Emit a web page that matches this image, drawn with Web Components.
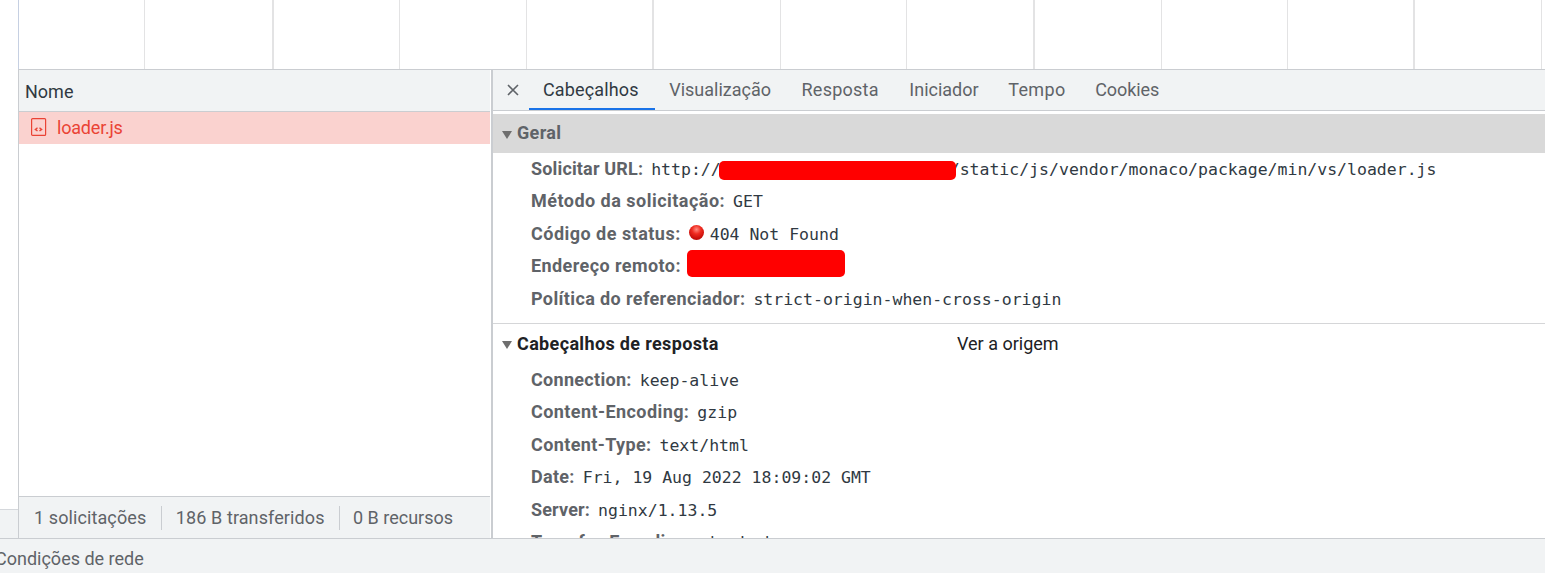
<!DOCTYPE html>
<html lang="pt-BR">
<head>
<meta charset="utf-8">
<title>Rede</title>
<style>
    html, body { margin: 0; height: 573px; overflow: hidden; background: #fff; }
    body { font-family: Roboto, "Liberation Sans", sans-serif; font-size: 18px; }
    network-panel { height: 573px; }
</style>
</head>
<body>
<network-panel>
    <request-list slot="list" name="loader.js">
        <status-item>1 solicitações</status-item>
        <status-item>186 B transferidos</status-item>
        <status-item>0 B recursos</status-item>
    </request-list>
    <request-details slot="details">
        <header-section title="Geral" band>
            <header-row style="--track:.16px" name="Solicitar URL:"><span>http://</span><redacted-box w="237" h="19" before="-2" after="-6" drop="3"></redacted-box><span>/static/js/vendor/monaco/package/min/vs/loader.js</span></header-row>
            <header-row style="--track:.48px" name="Método da solicitação:">GET</header-row>
            <header-row style="--track:.48px" name="Código de status:"><status-dot></status-dot>404 Not Found</header-row>
            <header-row style="--track:.42px" name="Endereço remoto:"><redacted-box w="158" h="27" before="-2" after="0" drop="-6"></redacted-box></header-row>
            <header-row style="--track:.38px" name="Política do referenciador:">strict-origin-when-cross-origin</header-row>
        </header-section>
        <header-section title="Cabeçalhos de resposta" action="Ver a origem">
            <header-row name="Connection:">keep-alive</header-row>
            <header-row style="--track:.42px" name="Content-Encoding:">gzip</header-row>
            <header-row style="--track:.38px" name="Content-Type:">text/html</header-row>
            <header-row name="Date:">Fri, 19 Aug 2022 18:09:02 GMT</header-row>
            <header-row style="--track:.16px" name="Server:">nginx/1.13.5</header-row>
            <header-row name="Transfer-Encoding:">chunked</header-row>
        </header-section>
    </request-details>
</network-panel>

<script>
class NetworkPanel extends HTMLElement {
    constructor() {
        super();
        this.attachShadow({ mode: 'open' });
        // some grid lines of the overview land on two pixels
        const widths = [[126, 1], [129, 2], [126, 1], [127, 1], [127, 2], [127, 1], [126, 1], [128, 2], [127, 1], [126, 1], [127, 2], [127, 1]];
        const cells = widths.map(([w, line]) => `<div class="cell" style="width:${w}px;border-right-width:${line}px"></div>`).join('');
        this.shadowRoot.innerHTML = `
            <style>
                :host { display: grid; grid-template-columns: 18px 1fr; grid-template-rows: 1fr 35px; }
                .rail { display: flex; flex-direction: column; }
                .rail .top { height: 509px; background: #fff; }
                .rail .bottom { flex: 1; background: #f1f3f4; border-top: 1px solid #d5d8dc; }
                .main { display: flex; flex-direction: column; min-width: 0; overflow: hidden; }
                .timeline { display: flex; height: 69px; flex: none; border-left: 1px solid #c6d0e2; background: #fff; }
                .cell { flex: none; box-sizing: border-box; border-right: 1px solid #e3e3e4; }
                .panes { flex: 1; min-height: 0; display: grid; grid-template-columns: 474px 1fr; border-top: 1px solid #cacdd1; border-left: 1px solid #cacdd1; }
                .left { min-height: 0; border-right: 2px solid #cacdd1; }
                .right { min-height: 0; min-width: 0; overflow: hidden; }
                .drawer { grid-column: 1 / 3; background: #f1f3f4; border-top: 1px solid #cacdd1; box-sizing: border-box; color: #5f6368; line-height: 40px; text-indent: -5px; white-space: nowrap; overflow: hidden; }
            </style>
            <div class="rail"><div class="top"></div><div class="bottom"></div></div>
            <div class="main">
                <div class="timeline">${cells}</div>
                <div class="panes">
                    <div class="left"><slot name="list"></slot></div>
                    <div class="right"><slot name="details"></slot></div>
                </div>
            </div>
            <div class="drawer">Condições de rede</div>
        `;
    }
}

class RequestList extends HTMLElement {
    constructor() {
        super();
        this.attachShadow({ mode: 'open' });
    }
    connectedCallback() {
        this.shadowRoot.innerHTML = `
            <style>
                :host { display: flex; flex-direction: column; height: 100%; box-sizing: border-box; padding-right: 1px; }
                .head { flex: none; height: 42px; box-sizing: border-box; border-bottom: 1px solid #cacdd1; background: #f1f3f4; color: #303942; line-height: 43px; padding-left: 6px; }
                .row { flex: none; height: 32px; display: flex; align-items: center; gap: 10px; padding-left: 12px; background: #fad2cf; color: #ea4335; }
                .row span { letter-spacing: -.2px; padding-bottom: 2px; }
                svg { display: block; margin-top: -2px; }
                .fill { flex: 1; }
                .foot { flex: none; height: 42px; box-sizing: border-box; border-top: 1px solid #cacdd1; background: #f1f3f4; display: flex; align-items: center; padding-left: 15px; }
            </style>
            <div class="head">Nome</div>
            <div class="row">
                <svg width="16" height="18" viewBox="0 0 16 18" fill="none" stroke="#ea4335">
                    <rect x=".6" y=".6" width="14" height="16.8" rx="1" stroke-width="1.2"/>
                    <path d="M6.5 9.8 4.4 11.4l2.1 1.6M8.5 9.8l2.1 1.6-2.1 1.6" stroke-width="1.4"/>
                </svg>
                <span>${this.getAttribute('name')}</span>
            </div>
            <div class="fill"></div>
            <div class="foot"><slot></slot></div>
        `;
    }
}

class StatusItem extends HTMLElement {
    constructor() {
        super();
        this.attachShadow({ mode: 'open' });
        this.shadowRoot.innerHTML = `
            <style>
                :host { display: block; color: #5f6368; white-space: nowrap; padding-right: 14.5px; margin-right: 14px; border-right: 1px solid #cacdd1; line-height: 24px; letter-spacing: .1px; }
                :host(:nth-child(2)) { padding-right: 14px; margin-right: 13.5px; }
                :host(:last-child) { border-right: 0; padding-right: 0; margin-right: 0; letter-spacing: 0; }
            </style>
            <slot></slot>
        `;
    }
}

class RequestDetails extends HTMLElement {
    constructor() {
        super();
        this.attachShadow({ mode: 'open' });
        this.shadowRoot.innerHTML = `
            <style>
                :host { display: block; height: 100%; overflow: hidden; }
                .tabs { display: flex; height: 41px; box-sizing: border-box; align-items: stretch; background: #f1f3f4; border-bottom: 1px solid #cacdd1; }
                .close { width: 36px; display: flex; align-items: center; justify-content: center; padding-left: 4px; box-sizing: border-box; }
                .tab { padding: 0 var(--after, 16.5px) 0 14px; color: #5f6368; line-height: 39px; white-space: nowrap; letter-spacing: var(--track, 0); }
                .tab.on { color: #303942; box-shadow: inset 0 -2px 0 #1a73e8; }
                .body { padding-top: 3px; }
            </style>
            <div class="tabs">
                <div class="close"><svg width="12" height="12" viewBox="0 0 12 12" stroke="#5f6368" stroke-width="1.6"><path d="M1 1l10 10M11 1 1 11"/></svg></div>
                <div class="tab on" style="--track:.15px">Cabeçalhos</div>
                <div class="tab">Visualização</div>
                <div class="tab" style="--track:.25px">Resposta</div>
                <div class="tab" style="--after:15.5px">Iniciador</div>
                <div class="tab" style="--track:.4px;--after:15.5px">Tempo</div>
                <div class="tab" style="--track:-.1px">Cookies</div>
            </div>
            <div class="body"><slot></slot></div>
        `;
    }
}

class HeaderSection extends HTMLElement {
    constructor() {
        super();
        this.attachShadow({ mode: 'open' });
    }
    connectedCallback() {
        const band = this.hasAttribute('band');
        const action = this.getAttribute('action');
        this.shadowRoot.innerHTML = `
            <style>
                :host { display: block; }
                :host([band]) { border-bottom: 1px solid #d5d6d8; padding-bottom: 7.3px; }
                .title { height: 39.2px; display: flex; align-items: center; padding-left: 9px; font-weight: 700; color: #202124; white-space: nowrap; }
                .title.band { background: #d9d9d9; color: #5f6368; }
                .title.plain { height: 40px; }
                .arrow { flex: none; width: 0; height: 0; border: 5.5px solid transparent; border-top: 8px solid #6e6e6e; border-bottom: 0; margin-right: 5px; margin-top: 2px; }
                .name { width: 440px; flex: none; letter-spacing: .35px; padding-bottom: 2px; }
                .action { font-weight: 400; padding-bottom: 2px; }
                .plain .name, .plain .action { padding-bottom: 0; }
            </style>
            <div class="title ${band ? 'band' : 'plain'}">
                <span class="arrow"></span>
                <span class="name">${this.getAttribute('title')}</span>
                ${action ? `<span class="action">${action}</span>` : ''}
            </div>
            <slot></slot>
        `;
    }
}

class HeaderRow extends HTMLElement {
    constructor() {
        super();
        this.attachShadow({ mode: 'open' });
    }
    connectedCallback() {
        this.shadowRoot.innerHTML = `
            <style>
                :host { display: flex; align-items: center; height: 32.5px; padding-left: 38px; white-space: nowrap; }
                .name { font-weight: 700; color: #5f6368; margin-right: 8px; letter-spacing: var(--track, .3px); padding-bottom: 2px; }
                .value { display: flex; align-items: center; font-family: "DejaVu Sans Mono", "Liberation Mono", monospace; font-size: 16.5px; color: #303942; white-space: pre; }
            </style>
            <span class="name">${this.getAttribute('name')}</span>
            <span class="value"><slot></slot></span>
        `;
    }
}

class RedactedBox extends HTMLElement {
    constructor() {
        super();
        this.attachShadow({ mode: 'open' });
    }
    connectedCallback() {
        const w = +this.getAttribute('w');
        const h = +this.getAttribute('h');
        // the redaction sits over the end of the neighbouring text
        this.shadowRoot.innerHTML = `
            <style>
                :host { display: block; flex: none; position: relative; z-index: 1; width: ${w}px; height: ${h}px; background: #f00; border-radius: 5px;
                    margin: ${this.getAttribute('drop')}px ${this.getAttribute('after')}px 0 ${this.getAttribute('before')}px; }
            </style>
        `;
    }
}

class StatusDot extends HTMLElement {
    constructor() {
        super();
        this.attachShadow({ mode: 'open' });
        this.shadowRoot.innerHTML = `
            <style>
                :host { display: block; flex: none; width: 15px; height: 15px; margin-right: 6px; margin-top: -3px; border-radius: 50%; background: radial-gradient(circle at 50% 30%, #ff8a80 0, #ef2b20 35%, #c80f0a 70%, #a30b08 100%); }
            </style>
        `;
    }
}

customElements.define('network-panel', NetworkPanel);
customElements.define('request-list', RequestList);
customElements.define('status-item', StatusItem);
customElements.define('request-details', RequestDetails);
customElements.define('header-section', HeaderSection);
customElements.define('header-row', HeaderRow);
customElements.define('redacted-box', RedactedBox);
customElements.define('status-dot', StatusDot);
</script>
</body>
</html>
